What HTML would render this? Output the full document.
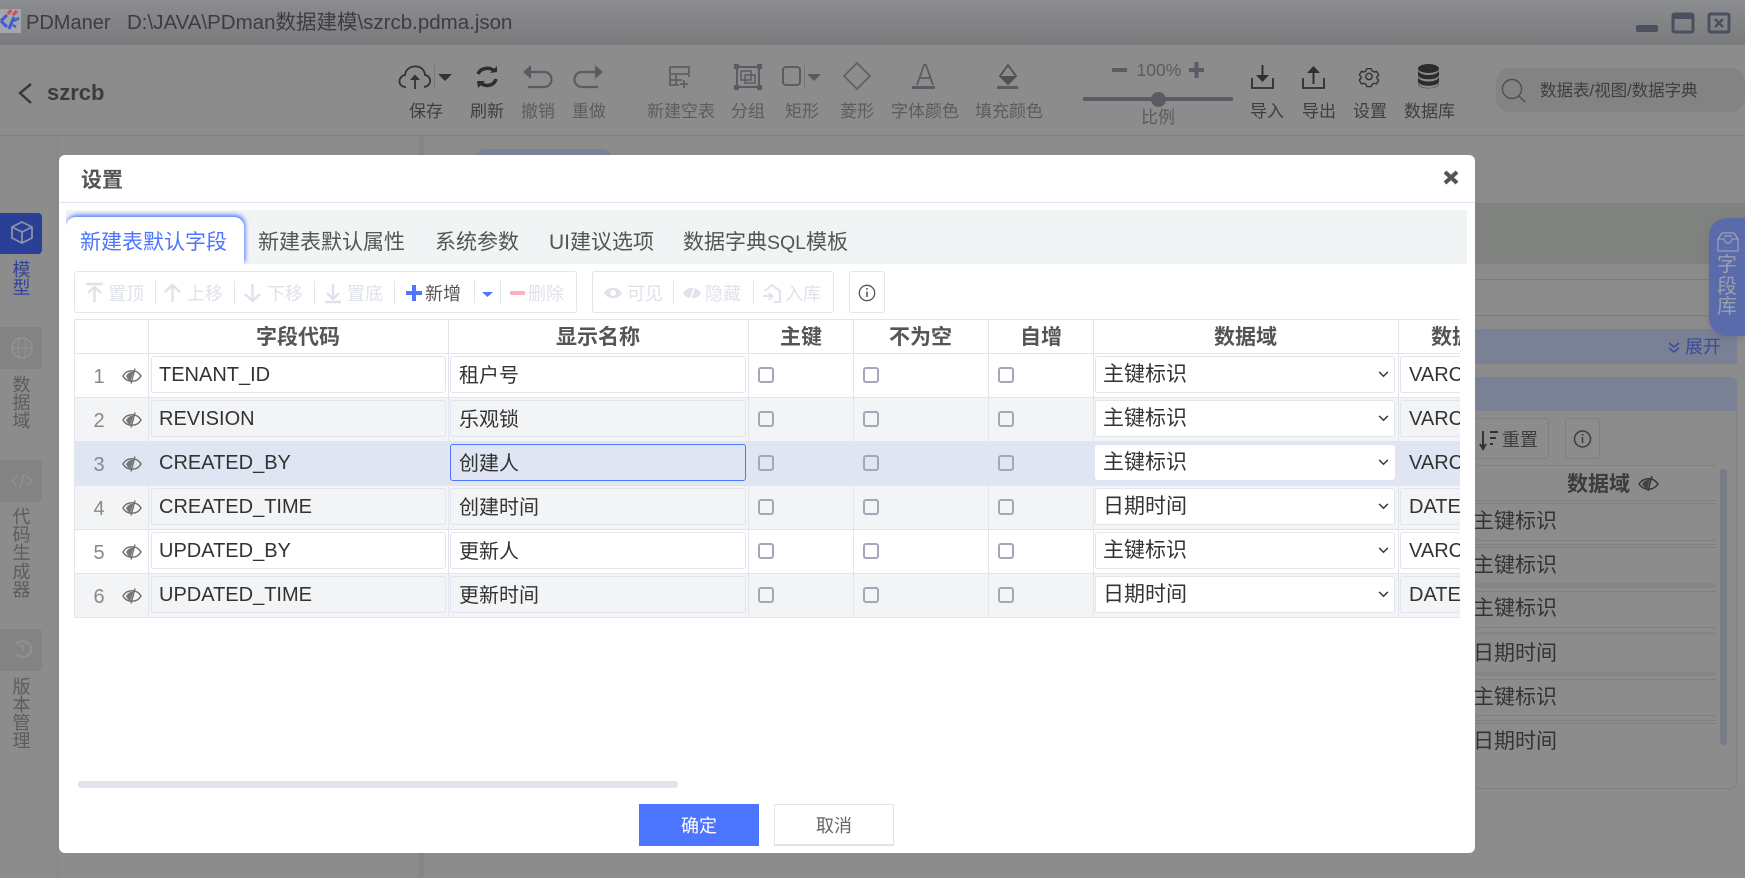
<!DOCTYPE html>
<html lang="zh"><head><meta charset="utf-8"><title>PDManer</title>
<style>
html,body{margin:0;padding:0;width:1745px;height:878px;overflow:hidden;background:#8c8c8c}
body{position:relative;font-family:"Liberation Sans","Noto Sans CJK SC",sans-serif;color:#333}
.t{position:absolute;white-space:nowrap;line-height:24px;height:24px}
.b{position:absolute;box-sizing:border-box}
svg{position:absolute;overflow:visible}
.tl{font-size:17px;color:#3e3e3e}
.tg{font-size:17px;color:#5c5c60}
.sd{font-size:18px;color:#5c5c60;left:12.500px}
.rw{font-size:20px;color:#333;margin-top:1px}
.se{font-size:21px;color:#333;margin-top:1px}
.rb{position:absolute;left:74px;width:1386px;height:44px;box-sizing:border-box;border-top:1px solid #e2e5ee}
.i{position:absolute;box-sizing:border-box;height:37px;border:1px solid #e3e5ee;border-radius:3px;background:#fff}
.g{background:#f3f4f6}
.c{position:absolute;box-sizing:border-box;width:16px;height:16px;border:2px solid #a6a7b6;border-radius:3px;background:#fff}
.cg{background:#f3f4f6}
.v{position:absolute;top:319px;height:298px;width:1px;background:#e2e5ee}
.h{font-size:21px;font-weight:bold;color:#555;top:326px}
.n{font-size:20px;color:#888;width:20px;text-align:center;left:89px;margin-top:1px}
.dis{font-size:18px;color:#dfe2ea;margin-top:1px}
.sp{position:absolute;width:1px;background:#e2e5ee;top:281px;height:24px}
.m{font-size:21px;color:#333}
.sl{position:absolute;left:1475px;width:241px;height:1px;background:#7f8084}
.sp2{position:absolute;left:1475px;width:241px;background:#848589}
.tb{font-size:21px;color:#555;top:231px}
</style></head><body>

<!-- background app -->
<div class="b" style="left:0;top:0;width:1745px;height:45px;background:linear-gradient(#8b8c8f,#7a7b7d)"></div>
<div class="b" style="left:0;top:135px;width:1745px;height:1px;background:#7f7f7f"></div>
<div class="b" style="left:57px;top:136px;width:1px;height:742px;background:#858585"></div>
<div class="b" style="left:418px;top:136px;width:6px;height:742px;background:#858585"></div>
<div class="b" style="left:475px;top:149px;width:137px;height:10px;background:#7a8194;border-radius:10px 10px 0 0"></div>
<div class="b" style="left:424px;top:203px;width:1321px;height:61px;background:#808280"></div>
<div class="b" style="left:424px;top:279px;width:1321px;height:1px;background:#7c7c7c"></div>
<div class="b" style="left:424px;top:315px;width:1321px;height:1px;background:#7c7c7c"></div>
<div class="b" style="left:424px;top:329px;width:1313px;height:35px;background:#7a8194;border-radius:0 5px 0 0"></div>
<div class="b" style="left:424px;top:377px;width:1313px;height:412px;border:1px solid #818181;border-radius:6px"></div>
<div class="b" style="left:424px;top:377px;width:1313px;height:34px;background:#7a8194;border-radius:6px 6px 0 0"></div>
<div class="b" style="left:1400px;top:418px;width:149px;height:41px;border:1px solid #7f7f7f;border-radius:3px"></div>
<div class="b" style="left:1565px;top:418px;width:35px;height:41px;border:1px solid #7f7f7f;border-radius:3px"></div>
<div class="b" style="left:1475px;top:465px;width:241px;height:1px;background:#7f7f7f"></div>
<div class="b" style="left:1720px;top:469px;width:7px;height:276px;background:#787c84;border-radius:3px"></div>

<div class="sl" style="top:500px"></div><div class="sl" style="top:503px"></div>
<div class="sl" style="top:540px"></div><div class="sl" style="top:544px"></div><div class="sl" style="top:547px"></div>
<div class="sp2" style="top:583px;height:5px"></div><div class="sl" style="top:591px"></div>
<div class="sl" style="top:627px"></div><div class="sp2" style="top:632px;height:3px"></div>
<div class="sp2" style="top:672px;height:4px"></div><div class="sl" style="top:679px"></div>
<div class="sl" style="top:715px"></div><div class="sl" style="top:720px"></div><div class="sl" style="top:723px"></div>

<div class="t" style="left:26px;top:11px;font-size:20px;color:#3d3d40">PDManer</div>
<div class="t" style="left:127px;top:11px;font-size:20.500px;color:#3d3d40">D:\JAVA\PDman数据建模\szrcb.pdma.json</div>
<div class="t" style="left:47px;top:81px;font-size:22px;font-weight:bold;color:#3c3c3c">szrcb</div>

<div class="t tl" style="left:409px;top:100px">保存</div>
<div class="t tl" style="left:470px;top:100px">刷新</div>
<div class="t tg" style="left:521px;top:100px">撤销</div>
<div class="t tg" style="left:572px;top:100px">重做</div>
<div class="t tg" style="left:647px;top:100px">新建空表</div>
<div class="t tg" style="left:731px;top:100px">分组</div>
<div class="t tg" style="left:785px;top:100px">矩形</div>
<div class="t tg" style="left:840px;top:100px">菱形</div>
<div class="t tg" style="left:891px;top:100px">字体颜色</div>
<div class="t tg" style="left:975px;top:100px">填充颜色</div>
<div class="t tg" style="left:1136.500px;top:58px;font-size:17.500px">100%</div>
<div class="t tg" style="left:1141px;top:106px">比例</div>
<div class="t tl" style="left:1250px;top:100px">导入</div>
<div class="t tl" style="left:1302px;top:100px">导出</div>
<div class="t tl" style="left:1353px;top:100px">设置</div>
<div class="t tl" style="left:1404px;top:100px">数据库</div>

<div class="b" style="left:1496px;top:68px;width:249px;height:44px;background:#838383;border-radius:14px"></div>
<div class="t" style="left:1540px;top:79px;font-size:16.500px;color:#3e3e3e">数据表/视图/数据字典</div>

<div class="b" style="left:1083px;top:97px;width:150px;height:4px;background:#5b5b63"></div>
<div class="b" style="left:1151px;top:92px;width:15px;height:15px;border-radius:50%;background:#5b5b63"></div>

<!-- sidebar -->
<div class="b" style="left:0;top:213px;width:42px;height:41px;background:#2a3f96;border-radius:0 4px 4px 0"></div>
<div class="b" style="left:0;top:327px;width:42px;height:42px;background:#838383;border-radius:0 4px 4px 0"></div>
<div class="b" style="left:0;top:460px;width:42px;height:42px;background:#838383;border-radius:0 4px 4px 0"></div>
<div class="b" style="left:0;top:629px;width:42px;height:42px;background:#838383;border-radius:0 4px 4px 0"></div>
<div class="t sd" style="top:258px;color:#2f42a0">模</div>
<div class="t sd" style="top:276px;color:#2f42a0">型</div>
<div class="t sd" style="top:373px">数</div><div class="t sd" style="top:391px">据</div><div class="t sd" style="top:409px">域</div>
<div class="t sd" style="top:505px">代</div><div class="t sd" style="top:523px">码</div><div class="t sd" style="top:541px">生</div><div class="t sd" style="top:560px">成</div><div class="t sd" style="top:578px">器</div>
<div class="t sd" style="top:675px">版</div><div class="t sd" style="top:693px">本</div><div class="t sd" style="top:711px">管</div><div class="t sd" style="top:729px">理</div>

<!-- right side -->
<div class="t" style="left:1685px;top:335px;font-size:18px;color:#3a4a9c">展开</div>
<div class="t" style="left:1502px;top:428px;font-size:18px;color:#3e3e3e">重置</div>
<div class="t" style="left:1567px;top:473px;font-size:21px;font-weight:bold;color:#3c3c3c">数据域</div>
<div class="t m" style="left:1473px;top:510px">主键标识</div>
<div class="t m" style="left:1473px;top:554px">主键标识</div>
<div class="t m" style="left:1473px;top:597px">主键标识</div>
<div class="t m" style="left:1473px;top:642px">日期时间</div>
<div class="t m" style="left:1473px;top:686px">主键标识</div>
<div class="t m" style="left:1473px;top:730px">日期时间</div>
<div class="b" style="left:1709px;top:218px;width:36px;height:118px;background:#5a6bab;border-radius:18px 0 0 18px;box-shadow:0 2px 6px rgba(80,90,130,.35)"></div>
<div class="t" style="left:1717px;top:253px;font-size:20px;color:#9a9fae">字</div>
<div class="t" style="left:1717px;top:275px;font-size:20px;color:#9a9fae">段</div>
<div class="t" style="left:1717px;top:295px;font-size:20px;color:#9a9fae">库</div>

<!-- background icons -->
<svg style="left:0;top:0" width="1745" height="878" viewBox="0 0 1745 878" fill="none">
  <!-- logo -->
  <rect x="0" y="9" width="21" height="24" fill="#a5a5aa"/>
  <path d="M1 21l6-6M1 21l6 6M9 29l5-12" stroke="#3a5fd0" stroke-width="3"/>
  <path d="M8 14l3-4M13 15l4-4" stroke="#d0503a" stroke-width="3"/>
  <path d="M14 21l5-3M13 25l3 2" stroke="#3a5fd0" stroke-width="2.500"/>
  <!-- win buttons -->
  <rect x="1636" y="25" width="22" height="7" rx="2" fill="#4c4f5e"/>
  <rect x="1673" y="14" width="20" height="18" rx="1.500" stroke="#4c4f5e" stroke-width="3"/><rect x="1673" y="14" width="20" height="5" fill="#4c4f5e"/>
  <rect x="1709" y="14" width="20" height="18" rx="1.500" stroke="#4c4f5e" stroke-width="3"/><path d="M1715 19l8 8M1723 19l-8 8" stroke="#4c4f5e" stroke-width="2.500"/>
  <!-- back -->
  <path d="M31 84L20 93l11 10" stroke="#3a3a3a" stroke-width="2.500"/>
  <!-- cloud -->
  <path d="M406 87c-9 0-8-11-1-12 1-11 19-12 20 0 7 1 7 11-1 12" stroke="#333" stroke-width="1.800"/>
  <path d="M415 89V78" stroke="#333" stroke-width="1.800"/><path d="M410 80l5-5.500 5 5.500z" fill="#333"/>
  <path d="M434.500 65v24" stroke="#777"/>
  <path d="M438 74h14l-7 7z" fill="#333"/>
  <!-- refresh -->
  <path d="M478 74c3-7 13-7 16-3M496 79c-2 8-13 8-16 3" stroke="#2e2e2e" stroke-width="3.500"/>
  <path d="M490 73l7-1 0-6zM485 81l-8 0 1 7z" fill="#2e2e2e"/>
  <!-- undo -->
  <path d="M526 72h18c10 0 10 15 0 15h-16" stroke="#5b5b63" stroke-width="2.200"/>
  <path d="M523 72l8-7v14z" fill="#5b5b63"/>
  <!-- redo -->
  <path d="M600 72h-18c-10 0-10 15 0 15h16" stroke="#5b5b63" stroke-width="2.200"/>
  <path d="M603 72l-8-7v14z" fill="#5b5b63"/>
  <!-- new table -->
  <path d="M679 85h-9V67h19v10M670 74h19M670 80h12M676 74v11M684 80v8M680 84h8" stroke="#5f5f66" stroke-width="1.800"/>
  <!-- group -->
  <rect x="737" y="67" width="22" height="20" stroke="#5b5b63" stroke-width="2"/>
  <rect x="741" y="71" width="10" height="9" stroke="#5b5b63" stroke-width="1.500"/><rect x="745" y="75" width="10" height="8" stroke="#5b5b63" stroke-width="1.500"/>
  <path d="M734 64h5v5h-5zM757 64h5v5h-5zM734 85h5v5h-5zM757 85h5v5h-5z" fill="#5b5b63"/>
  <!-- rect -->
  <rect x="783" y="67" width="17" height="18" rx="3" stroke="#5b5b63" stroke-width="2"/>
  <path d="M804.500 65v24" stroke="#777"/>
  <path d="M807 74h14l-7 7z" fill="#5b5b63"/>
  <!-- diamond -->
  <path d="M857 63l13 13-13 13-13-13z" stroke="#5f5f66" stroke-width="1.800"/>
  <!-- font color -->
  <path d="M917 85l7-20h2l7 20M920 78h10" stroke="#5b5b63" stroke-width="1.800"/>
  <rect x="912" y="86" width="23" height="3" fill="#5b5b63"/>
  <!-- fill -->
  <path d="M1008 65l-8 11 8 8 8-8z" stroke="#4e4e55" stroke-width="1.800"/><path d="M1000 76h16l-8 8z" fill="#4e4e55"/>
  <rect x="997" y="86" width="21" height="3" fill="#5b5b63"/>
  <!-- minus plus -->
  <rect x="1112" y="68" width="15" height="4" fill="#5b5b63"/>
  <path d="M1189 68h15v4h-15zM1194.500 62h4v16h-4z" fill="#5b5b63"/>
  <!-- import -->
  <path d="M1252 78v10h21V78" stroke="#2f2f2f" stroke-width="1.800"/><path d="M1262.500 65v14" stroke="#2f2f2f" stroke-width="2"/><path d="M1256 75h13l-6.500 7z" fill="#2f2f2f"/>
  <!-- export -->
  <path d="M1303 78v10h21V78" stroke="#2f2f2f" stroke-width="1.800"/><path d="M1313.500 72v12" stroke="#2f2f2f" stroke-width="2"/><path d="M1307 73h13l-6.500-7z" fill="#2f2f2f"/>
  <!-- gear -->
  <circle cx="1369" cy="76.500" r="3.200" stroke="#333" stroke-width="1.400"/>
  <g transform="translate(1369 76.500) scale(.75) translate(-1369 -76.500)">
    <path d="M1366 66h6l1 3 3 1.500 3-1 3 5-2.500 2.500 0 2 2.500 2-3 5.500-3-1-3 1.500-1 3h-6l-1-3-3-1.500-3 1-3-5.500 2.500-2 0-2-2.500-2.500 3-5 3 1 3-1.500z" stroke="#333" stroke-width="1.800" stroke-linejoin="round"/>
  </g>
  <!-- db -->
  <ellipse cx="1428.500" cy="68.500" rx="10.500" ry="4.500" fill="#2b2b2b"/>
  <path d="M1418 70.500c2 6 19 6 21 0v5c-2 5-19 5-21 0zM1418 77c2 6 19 6 21 0v5c-2 5-19 5-21 0zM1418 83.500c2 6 19 6 21 0v1c-2 5-19 5-21 0z" fill="#2b2b2b"/>
  <!-- search -->
  <circle cx="1512" cy="89" r="9.500" stroke="#4e4e54" stroke-width="1.400"/><path d="M1519 96l6 6" stroke="#4e4e54" stroke-width="1.400"/>
  <!-- sidebar icons -->
  <path d="M22 222l10 5v11l-10 5-10-5v-11zM12 227l10 5 10-5M22 232v11" stroke="#8d93a8" stroke-width="1.800"/>
  <circle cx="22" cy="348" r="10" stroke="#909090" stroke-width="2"/><ellipse cx="22" cy="348" rx="4" ry="10" stroke="#909090" stroke-width="1.500"/><path d="M12 348h20" stroke="#909090" stroke-width="1.500"/>
  <path d="M17 476l-5 5 5 5M27 476l5 5-5 5M24 474l-4 14" stroke="#909090" stroke-width="1.600"/>
  <path d="M16 645c2-6 15-5 15 4s-11 10-15 5" stroke="#909090" stroke-width="2.500"/><path d="M19 646h4v5" stroke="#909090" stroke-width="2"/>
  <!-- right icons -->
  <path d="M1669 343l5 4 5-4M1669 348l5 4 5-4" stroke="#3a4a9c" stroke-width="1.500"/>
  <path d="M1483 431v17M1480 444l3 5 3-5" stroke="#333" stroke-width="2"/><path d="M1490 432h8M1490 438h6M1490 444h3" stroke="#333" stroke-width="2"/>
  <circle cx="1582.500" cy="439" r="8" stroke="#3c3c3c" stroke-width="1.500"/><path d="M1582.500 437v6M1582.500 434v1.500" stroke="#3c3c3c" stroke-width="1.500"/>
  <path d="M1639 484c5-7 14-7 19 0-5 7-14 7-19 0z" stroke="#333" stroke-width="1.400"/>
  <path d="M1642 484c2-3 5-4.500 8-4.500l-2.500 9c-2.500 0-4-2-5.500-4.500z" fill="#444"/>
  <path d="M1652 476l-4 15" stroke="#333" stroke-width="1.400"/>
  <path d="M1718 239l4-6h12l4 6v12h-20zM1718 239h6l2 4h4l2-4h6M1724 236h8" stroke="#9a9fae" stroke-width="1.300"/>
</svg>

<!-- dialog -->
<div class="b" style="left:59px;top:155px;width:1416px;height:698px;background:#fff;border-radius:6px"></div>
<div class="b" style="left:59px;top:202px;width:1416px;height:1px;background:#e2e2f2"></div>
<div class="t" style="left:81px;top:169px;font-size:21px;font-weight:700;color:#555">设置</div>
<div class="b" style="left:66px;top:210px;width:1401px;height:54px;background:#f1f4f5"></div>
<div class="b" style="left:66px;top:217px;width:178px;height:47px;background:#fff;border-radius:10px 10px 0 0;box-shadow:1px -2px 5px #4d75ff"></div>
<div class="b" style="left:60px;top:264px;width:188px;height:7px;background:#fff"></div>
<div class="b" style="left:60px;top:210px;width:6px;height:54px;background:#fff"></div>
<div class="t tb" style="left:80px;color:#4d75ff">新建表默认字段</div>
<div class="t tb" style="left:258px">新建表默认属性</div>
<div class="t tb" style="left:435px">系统参数</div>
<div class="t tb" style="left:549px">UI建议选项</div>
<div class="t tb" style="left:683px">数据字典<span style="font-size:19.500px">SQL</span>模板</div>

<!-- toolbar -->
<div class="b" style="left:74px;top:271px;width:503px;height:42px;border:1px solid #e3e5ee;border-radius:3px"></div>
<div class="b" style="left:592px;top:271px;width:242px;height:42px;border:1px solid #e3e5ee;border-radius:3px"></div>
<div class="b" style="left:849px;top:271px;width:36px;height:42px;border:1px solid #e3e5ee;border-radius:3px"></div>
<div class="t dis" style="left:108px;top:281px">置顶</div>
<div class="sp" style="left:155px"></div>
<div class="t dis" style="left:187px;top:281px">上移</div>
<div class="sp" style="left:234px"></div>
<div class="t dis" style="left:267px;top:281px">下移</div>
<div class="sp" style="left:314px"></div>
<div class="t dis" style="left:347px;top:281px">置底</div>
<div class="sp" style="left:394px"></div>
<div class="t" style="left:425px;top:282px;font-size:18px;color:#555">新增</div>
<div class="sp" style="left:474px;top:279px"></div>
<div class="sp" style="left:500px"></div>
<div class="t dis" style="left:528px;top:281px">删除</div>
<div class="t dis" style="left:627px;top:281px">可见</div>
<div class="sp" style="left:673px"></div>
<div class="t dis" style="left:705px;top:281px">隐藏</div>
<div class="sp" style="left:753px"></div>
<div class="t dis" style="left:785px;top:281px">入库</div>

<!-- table rows -->
<div class="rb" style="top:319px;height:34px"></div>
<div class="rb" style="top:353px;background:#fff"></div>
<div class="rb" style="top:397px;background:#f3f4f6"></div>
<div class="rb" style="top:441px;background:#dfe5f2"></div>
<div class="rb" style="top:485px;background:#f3f4f6"></div>
<div class="rb" style="top:529px;background:#fff"></div>
<div class="rb" style="top:573px;height:45px;background:#f3f4f6;border-bottom:1px solid #e2e5ee"></div>
<div class="v" style="left:74px"></div><div class="v" style="left:148px"></div><div class="v" style="left:448px"></div><div class="v" style="left:748px"></div><div class="v" style="left:853px"></div><div class="v" style="left:988px"></div><div class="v" style="left:1093px"></div><div class="v" style="left:1398px"></div>

<div class="t h" style="left:256px">字段代码</div>
<div class="t h" style="left:556px">显示名称</div>
<div class="t h" style="left:780px">主键</div>
<div class="t h" style="left:889px">不为空</div>
<div class="t h" style="left:1020px">自增</div>
<div class="t h" style="left:1214px">数据域</div>
<div style="position:absolute;left:1400px;top:319px;width:60px;height:298px;overflow:hidden">
  <div class="t h" style="left:31px;top:7px">数据</div>
  <div class="i" style="left:0;top:37px;width:90px"></div><div class="t rw" style="left:9px;top:43px">VARCHAR</div>
  <div class="i g" style="left:0;top:81px;width:90px"></div><div class="t rw" style="left:9px;top:87px">VARCHAR</div>
  <div class="t rw" style="left:9px;top:131px">VARCHAR</div>
  <div class="i g" style="left:0;top:169px;width:90px"></div><div class="t rw" style="left:9px;top:175px">DATETIME</div>
  <div class="i" style="left:0;top:213px;width:90px"></div><div class="t rw" style="left:9px;top:219px">VARCHAR</div>
  <div class="i g" style="left:0;top:257px;width:90px"></div><div class="t rw" style="left:9px;top:263px">DATETIME</div>
</div>

<!-- row 1 -->
<div class="t n" style="top:364px">1</div>
<div class="i" style="left:151px;top:356px;width:295px"></div><div class="t rw" style="left:159px;top:362px">TENANT_ID</div>
<div class="i" style="left:450px;top:356px;width:296px"></div><div class="t rw" style="left:459px;top:363px">租户号</div>
<div class="c" style="left:758px;top:367px"></div><div class="c" style="left:863px;top:367px"></div><div class="c" style="left:998px;top:367px"></div>
<div class="i" style="left:1095px;top:356px;width:300px"></div><div class="t se" style="left:1103px;top:362px">主键标识</div>
<!-- row 2 -->
<div class="t n" style="top:408px">2</div>
<div class="i g" style="left:151px;top:400px;width:295px"></div><div class="t rw" style="left:159px;top:406px">REVISION</div>
<div class="i g" style="left:450px;top:400px;width:296px"></div><div class="t rw" style="left:459px;top:407px">乐观锁</div>
<div class="c cg" style="left:758px;top:411px"></div><div class="c cg" style="left:863px;top:411px"></div><div class="c cg" style="left:998px;top:411px"></div>
<div class="i" style="left:1095px;top:400px;width:300px"></div><div class="t se" style="left:1103px;top:406px">主键标识</div>
<!-- row 3 -->
<div class="t n" style="top:452px">3</div>
<div class="t rw" style="left:159px;top:450px">CREATED_BY</div>
<div class="i" style="left:450px;top:444px;width:296px;background:#dfe5f2;border-color:#4d75ff"></div><div class="t rw" style="left:459px;top:451px">创建人</div>
<div class="c" style="left:758px;top:455px;background:#dfe5f2"></div><div class="c" style="left:863px;top:455px;background:#dfe5f2"></div><div class="c" style="left:998px;top:455px;background:#dfe5f2"></div>
<div class="i" style="left:1095px;top:445px;width:300px;height:35px;border-color:#fff"></div><div class="t se" style="left:1103px;top:450px">主键标识</div>
<!-- row 4 -->
<div class="t n" style="top:496px">4</div>
<div class="i g" style="left:151px;top:488px;width:295px"></div><div class="t rw" style="left:159px;top:494px">CREATED_TIME</div>
<div class="i g" style="left:450px;top:488px;width:296px"></div><div class="t rw" style="left:459px;top:495px">创建时间</div>
<div class="c cg" style="left:758px;top:499px"></div><div class="c cg" style="left:863px;top:499px"></div><div class="c cg" style="left:998px;top:499px"></div>
<div class="i" style="left:1095px;top:488px;width:300px"></div><div class="t se" style="left:1103px;top:494px">日期时间</div>
<!-- row 5 -->
<div class="t n" style="top:540px">5</div>
<div class="i" style="left:151px;top:532px;width:295px"></div><div class="t rw" style="left:159px;top:538px">UPDATED_BY</div>
<div class="i" style="left:450px;top:532px;width:296px"></div><div class="t rw" style="left:459px;top:539px">更新人</div>
<div class="c" style="left:758px;top:543px"></div><div class="c" style="left:863px;top:543px"></div><div class="c" style="left:998px;top:543px"></div>
<div class="i" style="left:1095px;top:532px;width:300px"></div><div class="t se" style="left:1103px;top:538px">主键标识</div>
<!-- row 6 -->
<div class="t n" style="top:584px">6</div>
<div class="i g" style="left:151px;top:576px;width:295px"></div><div class="t rw" style="left:159px;top:582px">UPDATED_TIME</div>
<div class="i g" style="left:450px;top:576px;width:296px"></div><div class="t rw" style="left:459px;top:583px">更新时间</div>
<div class="c cg" style="left:758px;top:587px"></div><div class="c cg" style="left:863px;top:587px"></div><div class="c cg" style="left:998px;top:587px"></div>
<div class="i" style="left:1095px;top:576px;width:300px"></div><div class="t se" style="left:1103px;top:582px">日期时间</div>

<!-- dialog icons -->
<svg style="left:0;top:0" width="1745" height="878" viewBox="0 0 1745 878" fill="none">
  <defs>
    <symbol id="eo" viewBox="0 0 20 16" overflow="visible">
      <path d="M1 8c4-7 14-7 18 0-4 7-14 7-18 0z" stroke="#666" stroke-width="1.300" fill="none"/>
      <path d="M4 8c2-3 4.500-4.500 7.500-4.500L8.500 13C6.500 12.500 5 10.500 4 8z" fill="#777"/>
      <path d="M13 0.500L9 15.500" stroke="#666" stroke-width="1.300"/>
    </symbol>
    <symbol id="chev" viewBox="0 0 12 8" overflow="visible"><path d="M1 1l5 5 5-5" stroke="#333" stroke-width="1.600" fill="none"/></symbol>
  </defs>
  <path d="M1445 172l12 11M1457 172l-12 11" stroke="#555" stroke-width="4"/>
  <!-- disabled toolbar icons -->
  <g stroke="#dfe2ea" stroke-width="2.400">
    <path d="M86 284h17M94.500 302v-15M88 293l6.500-6 6.500 6"/>
    <path d="M172.500 302v-17M165 292l7.500-7 7.500 7"/>
    <path d="M252.500 284v17M245 294l7.500 7 7.500-7"/>
    <path d="M325 302h16M333 284v14M327 293l6 6 6-6"/>
  </g>
  <path d="M406 291h6v-6h4v6h6v4h-6v6h-4v-6h-6z" fill="#4d75ff"/>
  <path d="M482 292h11l-5.500 5z" fill="#4d75ff"/>
  <rect x="510" y="291" width="15" height="4" rx="1" fill="#fbb0bc"/>
  <path d="M604 293c4-7 14-7 18 0-4 7-14 7-18 0z" fill="#dfe2ea"/><circle cx="613" cy="293" r="3" fill="#fff"/>
  <path d="M683 293c4-7 14-7 18 0-4 7-14 7-18 0z" fill="#dfe2ea"/><path d="M695 285l-5 16" stroke="#fff" stroke-width="1.500"/>
  <path d="M765 291l7-6 8 6v11h-6M763 296h9l-3-3M772 296l-3 4" stroke="#dfe2ea" stroke-width="2"/>
  <circle cx="867" cy="293" r="7.700" stroke="#555" stroke-width="1.300"/><path d="M867 291.500v5.500M867 288v1.800" stroke="#555" stroke-width="1.500"/>
  <!-- eyes -->
  <use href="#eo" x="122" y="368" width="20" height="16"/>
  <use href="#eo" x="122" y="412" width="20" height="16"/>
  <use href="#eo" x="122" y="456" width="20" height="16"/>
  <use href="#eo" x="122" y="500" width="20" height="16"/>
  <use href="#eo" x="122" y="544" width="20" height="16"/>
  <use href="#eo" x="122" y="588" width="20" height="16"/>
  <!-- select chevrons -->
  <use href="#chev" x="1378" y="371" width="11" height="7"/>
  <use href="#chev" x="1378" y="415" width="11" height="7"/>
  <use href="#chev" x="1378" y="459" width="11" height="7"/>
  <use href="#chev" x="1378" y="503" width="11" height="7"/>
  <use href="#chev" x="1378" y="547" width="11" height="7"/>
  <use href="#chev" x="1378" y="591" width="11" height="7"/>
</svg>

<div class="b" style="left:78px;top:781px;width:600px;height:7px;background:#dfe4ee;border-radius:3px"></div>
<div class="b" style="left:639px;top:804px;width:120px;height:42px;background:#4d75ff;color:#fff;font-size:18px;line-height:44px;text-align:center">确定</div>
<div class="b" style="left:774px;top:804px;width:120px;height:42px;background:#fff;border:1px solid #e1e4ec;border-bottom-width:2px;color:#666;font-size:18px;line-height:42px;text-align:center">取消</div>
</body></html>
